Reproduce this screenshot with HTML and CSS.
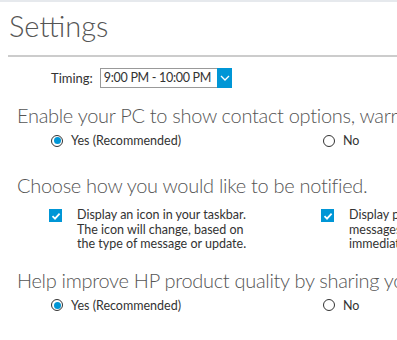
FILE: index.html
```html
<!DOCTYPE html>
<html lang="en">
<head>
    <meta charset="UTF-8">
    <title>Settings</title>
    <link rel="stylesheet" href="styles.css">
</head>
<body>
    <div class="topbar"></div>
    <div class="page">
        <h1 class="title">Settings</h1>

        <!-- Horario -->
        <div class="timing">
            <span class="timing-label">Timing:</span>
            <div class="select">
                <span class="select-value">9:00 PM - 10:00 PM</span>
                <span class="select-arrow">
                    <svg width="10" height="6" viewBox="0 0 10 6"><path d="M1 1 L5 5 L9 1" fill="none" stroke="#fff" stroke-width="1.3"/></svg>
                </span>
            </div>
        </div>

        <div class="section">
            <div class="section-title">Enable your PC to show contact options, warranty and service offers.</div>
            <div class="options">
                <label class="option"><span class="radio checked"></span>Yes (Recommended)</label>
                <label class="option"><span class="radio"></span>No</label>
            </div>
        </div>

        <div class="section">
            <div class="section-title">Choose how you would like to be notified.</div>
            <div class="options checks">
                <label class="check-option">
                    <span class="checkbox"><svg width="12" height="12" viewBox="0 0 12 12"><path d="M2.5 6.2 L5 8.6 L9.6 3.6" fill="none" stroke="#fff" stroke-width="1.8"/></svg></span>
                    <span class="check-text">Display an icon in your taskbar. The icon will change, based on the type of message or update.</span>
                </label>
                <label class="check-option">
                    <span class="checkbox"><svg width="12" height="12" viewBox="0 0 12 12"><path d="M2.5 6.2 L5 8.6 L9.6 3.6" fill="none" stroke="#fff" stroke-width="1.8"/></svg></span>
                    <span class="check-text narrow">Display pop-up messages requiring immediate attention.</span>
                </label>
            </div>
        </div>

        <div class="section last">
            <div class="section-title">Help improve HP product quality by sharing your information.</div>
            <div class="options">
                <label class="option"><span class="radio checked"></span>Yes (Recommended)</label>
                <label class="option"><span class="radio"></span>No</label>
            </div>
        </div>
    </div>
</body>
</html>
```

FILE: styles.css
```css
:root {
    --text-color: #555555;
    --dark-text: #333333;
    --accent-color: #0096d6;
    --line-color: #cccccc;
}

body, html {
    margin: 0;
    padding: 0;
    background: #ffffff;
    font-family: 'Lato', 'Liberation Sans', sans-serif;
    color: var(--text-color);
    overflow: hidden;
}

.topbar {
    height: 2px;
    background: #e6e9ed;
}

.page {
    padding: 0 0 0 8px;
}

.title {
    margin: 0;
    padding: 4px 0 0 1px;
    font-size: 29px;
    font-weight: 300;
    line-height: 40px;
    height: 49px;
    border-bottom: 2px solid var(--line-color);
}

.timing {
    display: flex;
    align-items: center;
    margin-top: 11px;
    padding-left: 43px;
    gap: 7px;
}

.timing-label {
    font-size: 13px;
    color: var(--dark-text);
}

.select {
    display: flex;
    height: 20px;
    border: 1px solid #999999;
    box-sizing: border-box;
}

.select-value {
    font-size: 12.5px;
    letter-spacing: -0.3px;
    color: var(--dark-text);
    line-height: 18px;
    padding: 0 6px 0 3px;
}

.select-arrow {
    width: 15px;
    margin: -1px -1px -1px 0;
    background: var(--accent-color);
    display: flex;
    align-items: center;
    justify-content: center;
}

.section {
    margin-top: 14px;
}

.section + .section {
    margin-top: 24px;
}

.section.last {
    margin-top: 15px;
}

.section-title {
    padding-left: 9px;
    font-size: 20px;
    font-weight: 300;
    letter-spacing: -0.3px;
    line-height: 26px;
    white-space: nowrap;
}

.options {
    display: grid;
    grid-template-columns: 272px 200px;
    padding-left: 43px;
    margin-top: 5px;
}

.option {
    display: flex;
    align-items: center;
    gap: 8px;
    font-size: 12.5px;
    color: var(--dark-text);
    white-space: nowrap;
}

.radio {
    width: 10px;
    height: 10px;
    border: 1px solid #333333;
    border-radius: 50%;
    position: relative;
}

.radio.checked::after {
    content: "";
    position: absolute;
    top: 1.5px;
    left: 1.5px;
    width: 7px;
    height: 7px;
    border-radius: 50%;
    background: var(--accent-color);
}

.checks {
    padding-left: 41px;
    margin-top: 10px;
}

.check-option {
    display: flex;
    align-items: flex-start;
    gap: 15px;
}

.checkbox {
    flex: none;
    width: 13px;
    height: 13px;
    margin-top: 1px;
    background: var(--accent-color);
    display: flex;
    align-items: center;
    justify-content: center;
}

.check-text {
    width: 172px;
    font-size: 12.5px;
    line-height: 14.5px;
    color: var(--dark-text);
}

.check-text.narrow {
    width: 115px;
}
```
